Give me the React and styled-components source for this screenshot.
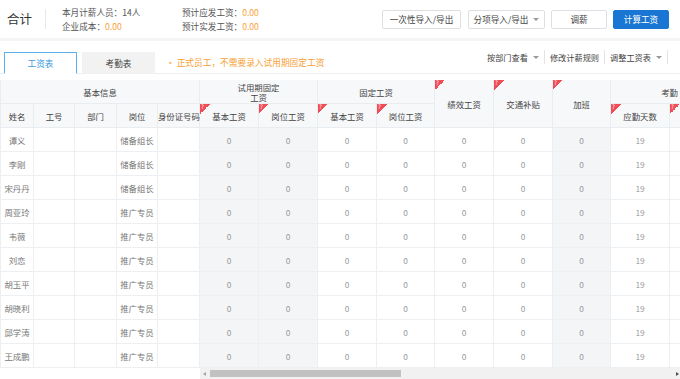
import React from "react";
import styled, { createGlobalStyle } from "styled-components";

const GlobalStyle = createGlobalStyle`
  body {
    margin: 0;
    background: #fff;
    font-family: "Noto Sans CJK SC", "Noto Sans", sans-serif;
    color: #333;
  }
`;

const staff = [
  ["谭义", "储备组长"],
  ["李刚", "储备组长"],
  ["宋丹丹", "储备组长"],
  ["周亚玲", "推广专员"],
  ["韦薇", "推广专员"],
  ["刘恋", "推广专员"],
  ["胡玉平", "推广专员"],
  ["胡晓利", "推广专员"],
  ["邱学涛", "推广专员"],
  ["王成鹏", "推广专员"],
];

// column widths follow the grid lines of the sheet
const widths = [33, 41, 42, 41, 42, 59, 59, 59, 58, 59, 59, 58, 59, 59];

export default function App() {
  return (
    <Page>
      <GlobalStyle />
      <TopBar>
        <Title>合计</Title>
        <Summary>
          <span>本月计薪人员：14人</span>
          <span>
            预计应发工资：<Amount>0.00</Amount>
          </span>
          <span>
            企业成本：<Amount>0.00</Amount>
          </span>
          <span>
            预计实发工资：<Amount>0.00</Amount>
          </span>
        </Summary>
        <Actions>
          <Button $w={79}>一次性导入/导出</Button>
          <Button $w={77}>
            分项导入/导出 <Caret />
          </Button>
          <Button $w={56}>调薪</Button>
          <Button $w={56} $primary>
            计算工资
          </Button>
        </Actions>
      </TopBar>

      <TabBar>
        <Tab $active>工资表</Tab>
        <Tab>考勤表</Tab>
        <Notice>• 正式员工，不需要录入试用期固定工资</Notice>
        <Tools>
          <ToolItem>
            按部门查看 <Caret />
          </ToolItem>
          <ToolItem>修改计薪规则</ToolItem>
          <ToolItem>
            调整工资表 <Caret />
          </ToolItem>
        </Tools>
      </TabBar>

      <TableWrap>
        <Table>
          <colgroup>
            {widths.map((w, i) => (
              <col key={i} style={{ width: w }} />
            ))}
          </colgroup>
          <thead>
            <tr>
              <Th colSpan={5}>基本信息</Th>
              <Th colSpan={2}>
                试用期固定
                <br />
                工资
              </Th>
              <Th colSpan={2}>固定工资</Th>
              <Th rowSpan={2}>
                <Marker>?</Marker>绩效工资
              </Th>
              <Th rowSpan={2}>
                <Marker>?</Marker>交通补贴
              </Th>
              <Th rowSpan={2}>
                <Marker>?</Marker>加班
              </Th>
              <Th colSpan={2}>考勤</Th>
            </tr>
            <tr>
              <Th>姓名</Th>
              <Th>工号</Th>
              <Th>部门</Th>
              <Th>岗位</Th>
              <Th>身份证号码</Th>
              <Th>
                <Marker>?</Marker>基本工资
              </Th>
              <Th>
                <Marker>?</Marker>岗位工资
              </Th>
              <Th>
                <Marker>?</Marker>基本工资
              </Th>
              <Th>
                <Marker>?</Marker>岗位工资
              </Th>
              <Th>
                <Marker>?</Marker>应勤天数
              </Th>
              <Th>
                <Marker>?</Marker>实勤天数
              </Th>
            </tr>
          </thead>
          <tbody>
            {staff.map(([name, post]) => (
              <tr key={name}>
                <Td $tone="name">{name}</Td>
                <Td />
                <Td />
                <Td $tone="name">{post}</Td>
                <Td />
                <Td $shaded>0</Td>
                <Td $shaded>0</Td>
                <Td>0</Td>
                <Td>0</Td>
                <Td>0</Td>
                <Td>0</Td>
                <Td $shaded>0</Td>
                <Td>19</Td>
                <Td>19</Td>
              </tr>
            ))}
          </tbody>
        </Table>
      </TableWrap>

      <ScrollRow>
        <ScrollSpacer />
        <Track>
          <Arrow $dir="left" />
          <Thumb />
          <Arrow $dir="right" />
        </Track>
      </ScrollRow>
    </Page>
  );
}

const Page = styled.div`
  width: 680px;
  height: 379px;
  overflow: hidden;
  font-size: 8.6px;
`;

const TopBar = styled.header`
  display: flex;
  align-items: center;
  height: 38px;
  padding: 0 11px 0 7px;
  border-bottom: 3px solid #f3f4f6;
`;

const Title = styled.div`
  font-size: 12.5px;
  line-height: 20px;
  color: #333;
  padding-right: 13px;
  border-right: 1px solid #e8e8e8;
`;

const Summary = styled.div`
  display: grid;
  grid-template-columns: 120px auto;
  grid-auto-rows: 14px;
  align-items: center;
  margin-left: 16px;
  color: #555;
  span {
    white-space: nowrap;
  }
`;

const Amount = styled.b`
  font-weight: normal;
  color: #f8a23a;
`;

const Actions = styled.div`
  display: flex;
  gap: 6px;
  margin-left: auto;
`;

const Button = styled.button`
  display: flex;
  align-items: center;
  justify-content: center;
  gap: 5px;
  width: ${(p) => p.$w}px;
  height: 19px;
  padding: 0;
  white-space: nowrap;
  font: inherit;
  font-size: 8.6px;
  border-radius: 2px;
  border: 1px solid ${(p) => (p.$primary ? "#1976d2" : "#dcdfe4")};
  background: ${(p) => (p.$primary ? "#1976d2" : "#fff")};
  color: ${(p) => (p.$primary ? "#fff" : "#444")};
  &:first-child {
    margin-right: 1px;
  }
`;

const Caret = styled.i`
  display: inline-block;
  width: 0;
  height: 0;
  border-left: 3px solid transparent;
  border-right: 3px solid transparent;
  border-top: 3px solid #9a9a9a;
`;

const TabBar = styled.div`
  display: flex;
  align-items: flex-end;
  height: 32px;
  padding-left: 4px;
  border-bottom: 1px solid #eceef0;
  margin-bottom: 6px;
`;

const Tab = styled.div`
  width: 73px;
  height: 22px;
  box-sizing: border-box;
  display: flex;
  align-items: center;
  justify-content: center;
  margin-right: 5px;
  margin-bottom: -1px;
  border: 1px solid ${(p) => (p.$active ? "#5bb2ec" : "#f2f2f2")};
  border-bottom: 1px solid ${(p) => (p.$active ? "#fff" : "#f2f2f2")};
  background: ${(p) => (p.$active ? "#fff" : "#f2f2f2")};
  color: ${(p) => (p.$active ? "#3d9be0" : "#444")};
`;

const Notice = styled.div`
  align-self: center;
  margin: 10px 0 0 6px;
  color: #f7a035;
  font-size: 8.7px;
`;

const Tools = styled.div`
  display: flex;
  align-self: center;
  margin-left: auto;
  margin-right: 12px;
  color: #444;
  font-size: 8.2px;
`;

const ToolItem = styled.div`
  display: flex;
  align-items: center;
  gap: 5px;
  height: 14px;
  padding: 0 5px;
  border-right: 1px solid #e4e4e4;
`;

const TableWrap = styled.div`
  width: 680px;
  overflow: hidden;
`;

const Table = styled.table`
  table-layout: fixed;
  width: 728px;
  border-collapse: collapse;
  font-size: 8.4px;
`;

const Th = styled.th`
  position: relative;
  height: 23px;
  padding: 0;
  font-weight: normal;
  line-height: 10px;
  color: #444;
  white-space: nowrap;
  background: #f7f8fa;
  border: 1px solid #eaedf0;
  border-top: none;
`;

const Td = styled.td`
  height: 23px;
  padding: 0;
  text-align: center;
  color: ${(p) => (p.$tone === "name" ? "#777" : "#9a9a9a")};
  background: ${(p) => (p.$shaded ? "#f4f5f7" : "#fff")};
  border: 1px solid #edf0f2;
`;

const Marker = styled.span`
  position: absolute;
  top: 0;
  left: 0;
  width: 10px;
  height: 10px;
  padding-left: 1px;
  box-sizing: border-box;
  font-size: 6px;
  line-height: 6px;
  text-align: left;
  color: #fff;
  background: linear-gradient(135deg, #ef4d57 50%, transparent 50%);
`;

const ScrollRow = styled.div`
  display: flex;
  height: 11px;
`;

const ScrollSpacer = styled.div`
  width: 200px;
`;

const Track = styled.div`
  flex: 1;
  display: flex;
  align-items: center;
  padding: 0 1px 0 3px;
  background: #f1f1f1;
`;

const Thumb = styled.div`
  width: 191px;
  height: 7px;
  margin-left: 4px;
  margin-right: auto;
  background: #c1c1c1;
`;

const Arrow = styled.i`
  width: 0;
  height: 0;
  border-top: 2px solid transparent;
  border-bottom: 2px solid transparent;
  ${(p) =>
    p.$dir === "left"
      ? "border-right: 3px solid #a3a3a3;"
      : "border-left: 3px solid #505050;"}
`;
